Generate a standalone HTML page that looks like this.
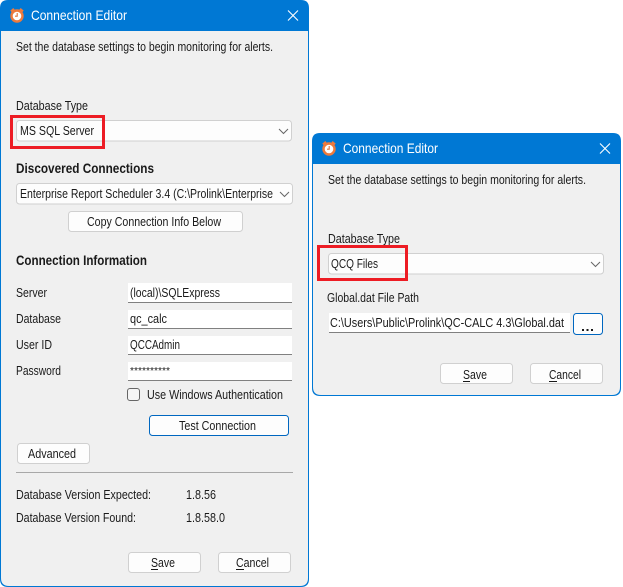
<!DOCTYPE html>
<html><head><meta charset="utf-8"><title>Connection Editor</title>
<style>
html,body{margin:0;padding:0;background:#fff;width:623px;height:587px;overflow:hidden}
svg{display:block}
text{font-family:"Liberation Sans",sans-serif;font-size:13px;fill:#1a1a1a}
.b{font-weight:bold;font-size:13.5px;fill:#1a1a1a}
.t{fill:#fff;font-size:14px}
.ctl{fill:#fdfdfd;stroke:#d0d0d0;stroke-width:1}
.inp{fill:#fff}
.ul{stroke:#1a1a1a;stroke-width:1}
.chev{fill:none;stroke:#666;stroke-width:1}
.x{stroke:#fff;stroke-width:1.1;fill:none}
</style></head><body>
<svg width="623" height="587" viewBox="0 0 623 587" xmlns="http://www.w3.org/2000/svg">
<defs>
<g id="clock">
<circle cx="7" cy="8" r="5.5" fill="#fff" stroke="#ee7a3c" stroke-width="2.4"/>
<path d="M1 3.4 L4 0.8 M13 3.4 L10 0.8" stroke="#ee7a3c" stroke-width="2.2" fill="none"/>
<path d="M7.2 5 V8.2 H5" stroke="#e0743c" stroke-width="1.1" fill="none"/>
</g>
</defs>

<!-- Window 1 -->
<path d="M8 0 H301 Q309 0 309 8 V579 Q309 587 301 587 H8 Q0 587 0 579 V8 Q0 0 8 0Z" fill="#0078d4"/>
<path d="M1 31 H308 V578 Q308 586 300 586 H9 Q1 586 1 578 Z" fill="#f0f0f0"/>
<use href="#clock" x="10" y="8"/>
<text class="t" x="31" y="20" textLength="96" lengthAdjust="spacingAndGlyphs">Connection Editor</text>
<path class="x" d="M288 10.5 L298 20.5 M298 10.5 L288 20.5"/>
<text x="16" y="51" textLength="257" lengthAdjust="spacingAndGlyphs">Set the database settings to begin monitoring for alerts.</text>
<text x="16" y="110" textLength="72" lengthAdjust="spacingAndGlyphs">Database Type</text>
<rect class="ctl" x="16.5" y="120.5" width="275" height="20.5" rx="3"/>
<text x="20" y="135" textLength="74" lengthAdjust="spacingAndGlyphs">MS SQL Server</text>
<path class="chev" d="M279 129 L283.5 133.5 L288 129"/>
<rect x="11.5" y="116.5" width="92" height="31" fill="none" stroke="#ed1c24" stroke-width="3"/>
<text class="b" x="16" y="173" textLength="138" lengthAdjust="spacingAndGlyphs">Discovered Connections</text>
<rect class="ctl" x="16.5" y="183.5" width="276" height="20.5" rx="3"/>
<text x="20" y="198" textLength="253" lengthAdjust="spacingAndGlyphs">Enterprise Report Scheduler 3.4 (C:\Prolink\Enterprise</text>
<path class="chev" d="M280 192 L284.5 196.5 L289 192"/>
<rect class="ctl" x="68.5" y="211.5" width="174" height="20" rx="3"/>
<text x="87" y="226" textLength="134" lengthAdjust="spacingAndGlyphs">Copy Connection Info Below</text>
<text class="b" x="16" y="265" textLength="131" lengthAdjust="spacingAndGlyphs">Connection Information</text>

<text x="16" y="297" textLength="31" lengthAdjust="spacingAndGlyphs">Server</text>
<text x="16" y="323" textLength="45" lengthAdjust="spacingAndGlyphs">Database</text>
<text x="16" y="349" textLength="36" lengthAdjust="spacingAndGlyphs">User ID</text>
<text x="16" y="375" textLength="45" lengthAdjust="spacingAndGlyphs">Password</text>

<rect class="inp" x="128" y="283" width="164" height="19"/><rect x="128" y="302" width="164" height="1" fill="#808080"/>
<rect class="inp" x="128" y="310" width="164" height="18"/><rect x="128" y="328" width="164" height="1" fill="#808080"/>
<rect class="inp" x="128" y="336" width="164" height="18"/><rect x="128" y="354" width="164" height="1" fill="#808080"/>
<rect class="inp" x="128" y="362" width="164" height="18"/><rect x="128" y="380" width="164" height="1" fill="#808080"/>
<text x="130" y="297" textLength="90" lengthAdjust="spacingAndGlyphs">(local)\SQLExpress</text>
<text x="130" y="323" textLength="37" lengthAdjust="spacingAndGlyphs">qc_calc</text>
<text x="130" y="349" textLength="50" lengthAdjust="spacingAndGlyphs">QCCAdmin</text>
<text x="130" y="374" textLength="40" lengthAdjust="spacingAndGlyphs" style="font-size:10px">**********</text>

<rect x="127.5" y="388.5" width="12" height="12" rx="2.5" fill="#f5f5f5" stroke="#666"/>
<text x="147" y="399" textLength="136" lengthAdjust="spacingAndGlyphs">Use Windows Authentication</text>
<rect x="149.5" y="415.5" width="139" height="20" rx="3" fill="#fdfdfd" stroke="#0067c0"/>
<text x="179" y="430" textLength="77" lengthAdjust="spacingAndGlyphs">Test Connection</text>
<rect class="ctl" x="17.5" y="443.5" width="72" height="20" rx="3"/>
<text x="28" y="458" textLength="48" lengthAdjust="spacingAndGlyphs">Advanced</text>
<rect x="16" y="472" width="277" height="1" fill="#a8a8a8"/>
<text x="16" y="499" textLength="135" lengthAdjust="spacingAndGlyphs">Database Version Expected:</text>
<text x="186" y="499" textLength="30" lengthAdjust="spacingAndGlyphs">1.8.56</text>
<text x="16" y="522" textLength="120" lengthAdjust="spacingAndGlyphs">Database Version Found:</text>
<text x="186" y="522" textLength="39" lengthAdjust="spacingAndGlyphs">1.8.58.0</text>
<rect class="ctl" x="128.5" y="552.5" width="72" height="20" rx="3"/>
<text x="151" y="567" textLength="24" lengthAdjust="spacingAndGlyphs">Save</text>
<path class="ul" d="M151 569.5 H158"/>
<rect class="ctl" x="218.5" y="552.5" width="72" height="20" rx="3"/>
<text x="236" y="567" textLength="33" lengthAdjust="spacingAndGlyphs">Cancel</text>
<path class="ul" d="M236 569.5 H244"/>

<!-- Window 2 -->
<path d="M320 133 H613 Q621 133 621 141 V388 Q621 396 613 396 H320 Q312 396 312 388 V141 Q312 133 320 133Z" fill="#0078d4"/>
<path d="M313 164 H620 V387 Q620 395 612 395 H321 Q313 395 313 387 Z" fill="#f0f0f0"/>
<use href="#clock" x="322" y="141"/>
<text class="t" x="343" y="153" textLength="95" lengthAdjust="spacingAndGlyphs">Connection Editor</text>
<path class="x" d="M600 143.5 L610 153.5 M610 143.5 L600 153.5"/>
<text x="328" y="184" textLength="258" lengthAdjust="spacingAndGlyphs">Set the database settings to begin monitoring for alerts.</text>
<text x="328" y="243" textLength="72" lengthAdjust="spacingAndGlyphs">Database Type</text>
<rect class="ctl" x="328.5" y="253.5" width="275" height="20.5" rx="3"/>
<text x="331" y="268" textLength="47" lengthAdjust="spacingAndGlyphs">QCQ Files</text>
<path class="chev" d="M591 262 L595.5 266.5 L600 262"/>
<rect x="318.5" y="246.5" width="88" height="33" fill="none" stroke="#ed1c24" stroke-width="3"/>
<text x="327" y="302" textLength="92" lengthAdjust="spacingAndGlyphs">Global.dat File Path</text>
<rect class="inp" x="329" y="313" width="241" height="19"/><rect x="329" y="332" width="241" height="1" fill="#808080"/>
<text x="330" y="327" textLength="234" lengthAdjust="spacingAndGlyphs">C:\Users\Public\Prolink\QC-CALC 4.3\Global.dat</text>
<rect x="573.5" y="313.5" width="29" height="21" rx="3" fill="#fdfdfd" stroke="#0067c0"/>
<rect x="582" y="329" width="2" height="2" fill="#1a1a1a"/><rect x="586.5" y="329" width="2" height="2" fill="#1a1a1a"/><rect x="591" y="329" width="2" height="2" fill="#1a1a1a"/>
<rect class="ctl" x="440.5" y="363.5" width="72" height="20" rx="3"/>
<text x="463" y="379" textLength="24" lengthAdjust="spacingAndGlyphs">Save</text>
<path class="ul" d="M463 381.5 H470"/>
<rect class="ctl" x="530.5" y="363.5" width="72" height="20" rx="3"/>
<text x="549" y="379" textLength="32" lengthAdjust="spacingAndGlyphs">Cancel</text>
<path class="ul" d="M549 381.5 H557"/>
</svg>
</body></html>
